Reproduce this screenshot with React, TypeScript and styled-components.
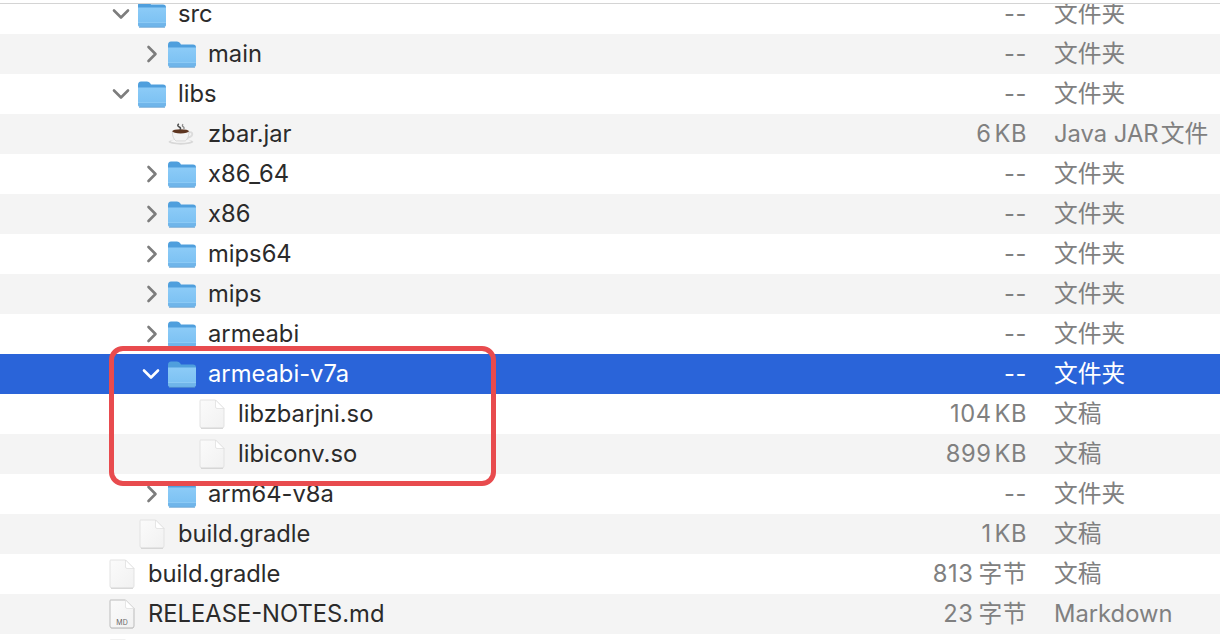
import React from "react";
import styled, { createGlobalStyle } from "styled-components";

const Global = createGlobalStyle`
  html, body { margin: 0; padding: 0; background: #fff; }
  body { font-family: Inter, "Noto Sans CJK SC", sans-serif; }
`;

const Page = styled.div`
  position: relative;
  width: 1220px;
  height: 640px;
  overflow: hidden;
  background: #fff;
`;

const TopRule = styled.div`
  position: relative;
  z-index: 1;
  height: 3px;
  background: #fff;
  border-bottom: 1px solid #d4d4d4;
`;

const List = styled.div`
  margin-top: -10px;
`;

const Row = styled.div<{ $alt: boolean; $selected: boolean }>`
  display: grid;
  grid-template-columns: 827px 200px 193px;
  height: 40px;
  align-items: center;
  background: ${(p) => (p.$selected ? "#2a64d9" : p.$alt ? "#f4f4f4" : "#fff")};
  color: ${(p) => (p.$selected ? "#fff" : "#2b2b2b")};
`;

const NameCell = styled.div<{ $level: number }>`
  position: relative;
  display: flex;
  align-items: center;
  padding-left: ${(p) => 107 + p.$level * 30}px;
`;

const Toggle = styled.span<{ $level: number; $open: boolean }>`
  position: absolute;
  left: ${(p) => 107 + p.$level * 30 - (p.$open ? 28 : 27)}px;
  width: 24px;
  height: 24px;
  display: flex;
  align-items: center;
  justify-content: center;
`;

const IconSlot = styled.span`
  width: 30px;
  height: 30px;
  display: flex;
  align-items: center;
  justify-content: center;
  flex: none;
`;

const Name = styled.span`
  margin-left: 11px;
  font-size: 23.75px;
  line-height: 40px;
  white-space: nowrap;
`;

const Size = styled.div<{ $selected: boolean }>`
  text-align: right;
  font-size: 23.7px;
  line-height: 40px;
  letter-spacing: 0.6px;
  color: ${(p) => (p.$selected ? "#fff" : "#808080")};
  white-space: nowrap;
`;

const Kind = styled.div<{ $selected: boolean }>`
  padding-left: 27px;
  font-size: 23.75px;
  line-height: 40px;
  color: ${(p) => (p.$selected ? "#fff" : "#808080")};
  white-space: nowrap;
`;

const Highlight = styled.div`
  position: absolute;
  left: 109px;
  top: 346px;
  width: 377px;
  height: 130px;
  border: 5px solid #e84b4e;
  border-radius: 14px;
  z-index: 2;
`;

const Chevron = ({ open, selected }: { open: boolean; selected: boolean }) => (
  <svg width="20" height="20" viewBox="0 0 20 20" fill="none">
    <path
      d={open ? "M3 6.5 L10 13.5 L17 6.5" : "M6.5 3 L13.5 10 L6.5 17"}
      stroke={selected ? "#fff" : "#7d7d7d"}
      strokeWidth="2.6"
      strokeLinecap="round"
      strokeLinejoin="round"
    />
  </svg>
);

const Folder = ({ id }: { id: string }) => (
  <svg width="30" height="28" viewBox="0 0 30 28">
    <defs>
      <linearGradient id={id} x1="0" y1="0" x2="0" y2="1">
        <stop offset="0" stopColor="#8ccbf7" />
        <stop offset="1" stopColor="#78bff2" />
      </linearGradient>
    </defs>
    <path d="M1 5 Q1 1.5 4 1.5 H10 Q12 1.5 13 3 L14 4.5 H26 Q29 4.5 29 7.5 V12 H1 Z" fill="#4f9fdd" />
    <path d="M1 7.5 H29 V24 Q29 27 26 27 H4 Q1 27 1 24 Z" fill={`url(#${id})`} />
    <path d="M1 23 H29 V24.5 Q29 27 26 27 H4 Q1 27 1 24.5 Z" fill="#6fb5ea" />
    <path d="M1 22.6 H29" stroke="#95d0f7" strokeWidth="0.7" />
    <path d="M2 27.3 H28" stroke="#5d9ccf" strokeWidth="0.8" />
  </svg>
);

const FileIcon = ({ md, id }: { md?: boolean; id: string }) => (
  <svg width="28" height="30" viewBox="0 0 28 30">
    <defs>
      <linearGradient id={id} x1="0" y1="0" x2="1" y2="1">
        <stop offset="0" stopColor="#fbfbfb" />
        <stop offset="1" stopColor="#f1f1f1" />
      </linearGradient>
    </defs>
    <path
      d="M2.5 1 H17.5 L26 9.5 V27 Q26 29 24 29 H4 Q2 29 2 27 V2 Q2 1 2.5 1 Z"
      fill={`url(#${id})`}
      stroke={md ? "#b5b5b5" : "#e0e0e0"}
      strokeWidth="0.9"
    />
    <path d="M3 29.3 H25" stroke="#c9c9c9" strokeWidth="0.8" />
    <path d="M17.5 1 V8 Q17.5 9.5 19 9.5 H26 Z" fill="#fff" stroke="#dcdcdc" strokeWidth="0.7" />
    {md && (
      <text x="14" y="25.5" textAnchor="middle" fontSize="7" fontFamily="Inter, sans-serif" fill="#666">
        MD
      </text>
    )}
  </svg>
);

const Coffee = () => (
  <svg width="28" height="24" viewBox="0 0 26 22">
    <ellipse cx="12" cy="18.3" rx="11.5" ry="2.6" fill="#d8d8d8" />
    <ellipse cx="12" cy="17.6" rx="9.5" ry="1.6" fill="#f6f6f6" />
    <path d="M18 9.5 Q23 8.5 22.5 11.5 Q22 14 16.5 15" fill="none" stroke="#dcdcdc" strokeWidth="1.8" />
    <path d="M4 8.5 H19.5 Q19.5 15 16 17.5 H7.5 Q4 15 4 8.5 Z" fill="#f3f3f3" stroke="#c8c8c8" strokeWidth="0.6" />
    <ellipse cx="11.7" cy="8.5" rx="7.7" ry="2" fill="#5d3520" />
    <path d="M10 1.5 Q8 3.5 10.5 4.5 Q12.5 5.5 11 7" fill="none" stroke="#4a4a4a" strokeWidth="1.4" />
    <path d="M14 2 Q12.5 3.5 14.5 4.5 Q15.5 5.5 14.5 6.5" fill="none" stroke="#8a8a8a" strokeWidth="1.2" />
  </svg>
);

type Item = {
  name: string;
  level: number;
  toggle?: "open" | "closed";
  icon: "folder" | "file" | "md" | "jar";
  size: string;
  kind: string;
  selected?: boolean;
};

const F = "文件夹";
const rows: Item[] = [
  { name: "src", level: 1, toggle: "open", icon: "folder", size: "--", kind: F },
  { name: "main", level: 2, toggle: "closed", icon: "folder", size: "--", kind: F },
  { name: "libs", level: 1, toggle: "open", icon: "folder", size: "--", kind: F },
  { name: "zbar.jar", level: 2, icon: "jar", size: "6\u200aKB", kind: "Java JAR\u200a文件" },
  { name: "x86_64", level: 2, toggle: "closed", icon: "folder", size: "--", kind: F },
  { name: "x86", level: 2, toggle: "closed", icon: "folder", size: "--", kind: F },
  { name: "mips64", level: 2, toggle: "closed", icon: "folder", size: "--", kind: F },
  { name: "mips", level: 2, toggle: "closed", icon: "folder", size: "--", kind: F },
  { name: "armeabi", level: 2, toggle: "closed", icon: "folder", size: "--", kind: F },
  { name: "armeabi-v7a", level: 2, toggle: "open", icon: "folder", size: "--", kind: F, selected: true },
  { name: "libzbarjni.so", level: 3, icon: "file", size: "104\u200aKB", kind: "文稿" },
  { name: "libiconv.so", level: 3, icon: "file", size: "899\u200aKB", kind: "文稿" },
  { name: "arm64-v8a", level: 2, toggle: "closed", icon: "folder", size: "--", kind: F },
  { name: "build.gradle", level: 1, icon: "file", size: "1\u200aKB", kind: "文稿" },
  { name: "build.gradle", level: 0, icon: "file", size: "813\u2009字节", kind: "文稿" },
  { name: "RELEASE-NOTES.md", level: 0, icon: "md", size: "23\u2009字节", kind: "Markdown" },
  { name: "", level: 0, icon: "file", size: "", kind: "" },
];

export default function App() {
  return (
    <Page>
      <Global />
      <TopRule />
      <List>
        {rows.map((r, i) => {
          const selected = !!r.selected;
          return (
            <Row key={i} $alt={i % 2 === 1} $selected={selected}>
              <NameCell $level={r.level}>
                {r.toggle && (
                  <Toggle $level={r.level} $open={r.toggle === "open"}>
                    <Chevron open={r.toggle === "open"} selected={selected} />
                  </Toggle>
                )}
                <IconSlot>
                  {r.icon === "folder" && <Folder id={`folder-${i}`} />}
                  {r.icon === "file" && <FileIcon id={`file-${i}`} />}
                  {r.icon === "md" && <FileIcon md id={`file-${i}`} />}
                  {r.icon === "jar" && <Coffee />}
                </IconSlot>
                <Name>{r.name}</Name>
              </NameCell>
              <Size $selected={selected}>{r.size}</Size>
              <Kind $selected={selected}>{r.kind}</Kind>
            </Row>
          );
        })}
      </List>
      <Highlight />
    </Page>
  );
}
